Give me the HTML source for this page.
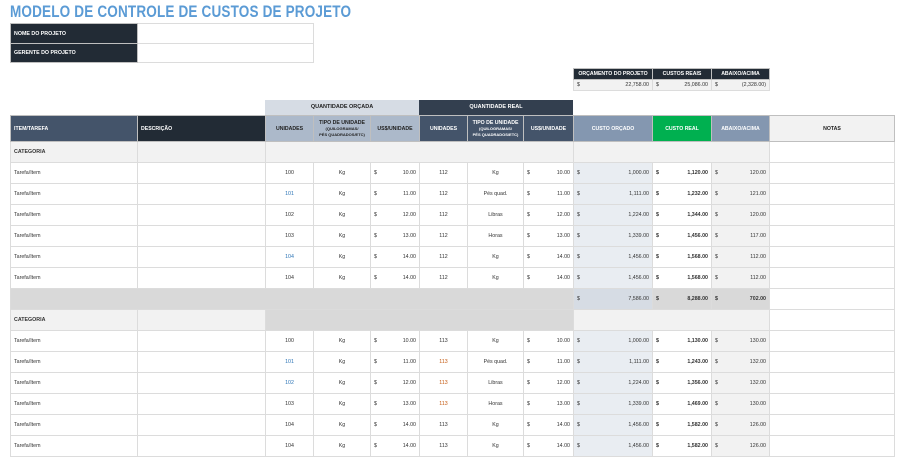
<!DOCTYPE html>
<html><head><meta charset="utf-8"><style>
*{margin:0;padding:0;box-sizing:border-box}
body{width:900px;height:460px;background:#fff;font-family:"Liberation Sans",sans-serif;position:relative;overflow:hidden;color:#333}
h1{position:absolute;left:10px;top:3px;font-size:16.5px;color:#5b9bd5;font-weight:bold;letter-spacing:0.2px;transform:scaleX(0.82);transform-origin:left top;white-space:nowrap}
.abs{position:absolute}
table{border-collapse:collapse;table-layout:fixed;position:absolute}
td{border:1px solid #dcdcdc;font-size:5.3px;overflow:hidden;white-space:nowrap;padding:0 3px}
.h td{font-weight:bold;color:#fff;text-align:center;font-size:5.2px;border-color:#bfbfbf}
.m{display:flex;justify-content:space-between}
.c{text-align:center}
.b{font-weight:bold}
.bl{color:#2e75b6}.or{color:#c55a11}
</style></head><body>
<h1>MODELO DE CONTROLE DE CUSTOS DE PROJETO</h1>
<table style="left:10px;top:23px;width:303px">
<col style="width:127px"><col style="width:176px">
<tr style="height:20px"><td style="background:#222b35;color:#fff;font-weight:bold;border-color:#bfbfbf">NOME DO PROJETO</td><td></td></tr>
<tr style="height:19px"><td style="background:#222b35;color:#fff;font-weight:bold;border-color:#bfbfbf">GERENTE DO PROJETO</td><td></td></tr>
</table>
<table style="left:573px;top:68px;width:196px">
<col style="width:79px"><col style="width:59px"><col style="width:58px">
<tr class="h" style="height:11px"><td style="background:#222b35">ORÇAMENTO DO PROJETO</td><td style="background:#222b35">CUSTOS REAIS</td><td style="background:#222b35">ABAIXO/ACIMA</td></tr>
<tr style="height:11px;background:#f2f2f2"><td><div class="m"><span>$</span><span>22,758.00</span></div></td><td><div class="m"><span>$</span><span>25,086.00</span></div></td><td><div class="m"><span>$</span><span>(2,328.00)</span></div></td></tr>
</table>
<div class="abs" style="left:265px;top:100px;width:154px;height:15px;background:#d6dce4;font-size:5.5px;font-weight:bold;text-align:center;line-height:15px;color:#222">QUANTIDADE ORÇADA</div>
<div class="abs" style="left:419px;top:100px;width:154px;height:15px;background:#333f4f;font-size:5.5px;font-weight:bold;text-align:center;line-height:15px;color:#fff">QUANTIDADE REAL</div>
<table style="left:10px;top:115px;width:884px">
<col style="width:127px"><col style="width:128px"><col style="width:48px"><col style="width:57px"><col style="width:49px"><col style="width:48px"><col style="width:56px"><col style="width:50px"><col style="width:79px"><col style="width:59px"><col style="width:58px"><col style="width:125px">
<tr class="h" style="height:26px">
<td style="background:#44546a;text-align:left">ITEM/TAREFA</td>
<td style="background:#222b35;text-align:left">DESCRIÇÃO</td>
<td style="background:#acb9ca;color:#222">UNIDADES</td>
<td style="background:#acb9ca;color:#222;line-height:6px">TIPO DE UNIDADE<br><span style="font-size:4px">(QUILOGRAMAS/<br>PÉS QUADRADOS/ETC)</span></td>
<td style="background:#acb9ca;color:#222">US$/UNIDADE</td>
<td style="background:#44546a">UNIDADES</td>
<td style="background:#44546a;line-height:6px">TIPO DE UNIDADE<br><span style="font-size:4px">(QUILOGRAMAS/<br>PÉS QUADRADOS/ETC)</span></td>
<td style="background:#44546a">US$/UNIDADE</td>
<td style="background:#8497b0">CUSTO ORÇADO</td>
<td style="background:#00b050">CUSTO REAL</td>
<td style="background:#8497b0">ABAIXO/ACIMA</td>
<td style="background:#f2f2f2;color:#222">NOTAS</td>
</tr>
<tr style="height:21px"><td class="b" style="background:#f2f2f2">CATEGORIA</td><td style="background:#f2f2f2"></td><td colspan="6" style="background:#f2f2f2"></td><td colspan="3" style="background:#f2f2f2"></td><td></td></tr>
<tr style="height:21px"><td>Tarefa/Item</td><td></td><td class="c">100</td><td class="c">Kg</td><td><div class="m"><span>$</span><span>10.00</span></div></td><td class="c">112</td><td class="c">Kg</td><td><div class="m"><span>$</span><span>10.00</span></div></td><td style="background:#e9edf2"><div class="m"><span>$</span><span>1,000.00</span></div></td><td class="b"><div class="m"><span>$</span><span>1,120.00</span></div></td><td style="background:#f2f2f2"><div class="m"><span>$</span><span>120.00</span></div></td><td></td></tr>
<tr style="height:21px"><td>Tarefa/Item</td><td></td><td class="c bl">101</td><td class="c">Kg</td><td><div class="m"><span>$</span><span>11.00</span></div></td><td class="c">112</td><td class="c">Pés quad.</td><td><div class="m"><span>$</span><span>11.00</span></div></td><td style="background:#e9edf2"><div class="m"><span>$</span><span>1,111.00</span></div></td><td class="b"><div class="m"><span>$</span><span>1,232.00</span></div></td><td style="background:#f2f2f2"><div class="m"><span>$</span><span>121.00</span></div></td><td></td></tr>
<tr style="height:21px"><td>Tarefa/Item</td><td></td><td class="c">102</td><td class="c">Kg</td><td><div class="m"><span>$</span><span>12.00</span></div></td><td class="c">112</td><td class="c">Libras</td><td><div class="m"><span>$</span><span>12.00</span></div></td><td style="background:#e9edf2"><div class="m"><span>$</span><span>1,224.00</span></div></td><td class="b"><div class="m"><span>$</span><span>1,344.00</span></div></td><td style="background:#f2f2f2"><div class="m"><span>$</span><span>120.00</span></div></td><td></td></tr>
<tr style="height:21px"><td>Tarefa/Item</td><td></td><td class="c">103</td><td class="c">Kg</td><td><div class="m"><span>$</span><span>13.00</span></div></td><td class="c">112</td><td class="c">Horas</td><td><div class="m"><span>$</span><span>13.00</span></div></td><td style="background:#e9edf2"><div class="m"><span>$</span><span>1,339.00</span></div></td><td class="b"><div class="m"><span>$</span><span>1,456.00</span></div></td><td style="background:#f2f2f2"><div class="m"><span>$</span><span>117.00</span></div></td><td></td></tr>
<tr style="height:21px"><td>Tarefa/Item</td><td></td><td class="c bl">104</td><td class="c">Kg</td><td><div class="m"><span>$</span><span>14.00</span></div></td><td class="c">112</td><td class="c">Kg</td><td><div class="m"><span>$</span><span>14.00</span></div></td><td style="background:#e9edf2"><div class="m"><span>$</span><span>1,456.00</span></div></td><td class="b"><div class="m"><span>$</span><span>1,568.00</span></div></td><td style="background:#f2f2f2"><div class="m"><span>$</span><span>112.00</span></div></td><td></td></tr>
<tr style="height:21px"><td>Tarefa/Item</td><td></td><td class="c">104</td><td class="c">Kg</td><td><div class="m"><span>$</span><span>14.00</span></div></td><td class="c">112</td><td class="c">Kg</td><td><div class="m"><span>$</span><span>14.00</span></div></td><td style="background:#e9edf2"><div class="m"><span>$</span><span>1,456.00</span></div></td><td class="b"><div class="m"><span>$</span><span>1,568.00</span></div></td><td style="background:#f2f2f2"><div class="m"><span>$</span><span>112.00</span></div></td><td></td></tr>
<tr style="height:21px"><td colspan="8" style="background:#d9d9d9"></td><td style="background:#d6dce4"><div class="m"><span>$</span><span>7,586.00</span></div></td><td class="b" style="background:#d9d9d9"><div class="m"><span>$</span><span>8,288.00</span></div></td><td class="b" style="background:#d9d9d9"><div class="m"><span>$</span><span>702.00</span></div></td><td></td></tr>
<tr style="height:21px"><td class="b" style="background:#f2f2f2">CATEGORIA</td><td style="background:#f2f2f2"></td><td colspan="6" style="background:#d9d9d9"></td><td colspan="3" style="background:#f2f2f2"></td><td></td></tr>
<tr style="height:21px"><td>Tarefa/Item</td><td></td><td class="c">100</td><td class="c">Kg</td><td><div class="m"><span>$</span><span>10.00</span></div></td><td class="c">113</td><td class="c">Kg</td><td><div class="m"><span>$</span><span>10.00</span></div></td><td style="background:#e9edf2"><div class="m"><span>$</span><span>1,000.00</span></div></td><td class="b"><div class="m"><span>$</span><span>1,130.00</span></div></td><td style="background:#f2f2f2"><div class="m"><span>$</span><span>130.00</span></div></td><td></td></tr>
<tr style="height:21px"><td>Tarefa/Item</td><td></td><td class="c bl">101</td><td class="c">Kg</td><td><div class="m"><span>$</span><span>11.00</span></div></td><td class="c or">113</td><td class="c">Pés quad.</td><td><div class="m"><span>$</span><span>11.00</span></div></td><td style="background:#e9edf2"><div class="m"><span>$</span><span>1,111.00</span></div></td><td class="b"><div class="m"><span>$</span><span>1,243.00</span></div></td><td style="background:#f2f2f2"><div class="m"><span>$</span><span>132.00</span></div></td><td></td></tr>
<tr style="height:21px"><td>Tarefa/Item</td><td></td><td class="c bl">102</td><td class="c">Kg</td><td><div class="m"><span>$</span><span>12.00</span></div></td><td class="c or">113</td><td class="c">Libras</td><td><div class="m"><span>$</span><span>12.00</span></div></td><td style="background:#e9edf2"><div class="m"><span>$</span><span>1,224.00</span></div></td><td class="b"><div class="m"><span>$</span><span>1,356.00</span></div></td><td style="background:#f2f2f2"><div class="m"><span>$</span><span>132.00</span></div></td><td></td></tr>
<tr style="height:21px"><td>Tarefa/Item</td><td></td><td class="c">103</td><td class="c">Kg</td><td><div class="m"><span>$</span><span>13.00</span></div></td><td class="c or">113</td><td class="c">Horas</td><td><div class="m"><span>$</span><span>13.00</span></div></td><td style="background:#e9edf2"><div class="m"><span>$</span><span>1,339.00</span></div></td><td class="b"><div class="m"><span>$</span><span>1,469.00</span></div></td><td style="background:#f2f2f2"><div class="m"><span>$</span><span>130.00</span></div></td><td></td></tr>
<tr style="height:21px"><td>Tarefa/Item</td><td></td><td class="c">104</td><td class="c">Kg</td><td><div class="m"><span>$</span><span>14.00</span></div></td><td class="c">113</td><td class="c">Kg</td><td><div class="m"><span>$</span><span>14.00</span></div></td><td style="background:#e9edf2"><div class="m"><span>$</span><span>1,456.00</span></div></td><td class="b"><div class="m"><span>$</span><span>1,582.00</span></div></td><td style="background:#f2f2f2"><div class="m"><span>$</span><span>126.00</span></div></td><td></td></tr>
<tr style="height:21px"><td>Tarefa/Item</td><td></td><td class="c">104</td><td class="c">Kg</td><td><div class="m"><span>$</span><span>14.00</span></div></td><td class="c">113</td><td class="c">Kg</td><td><div class="m"><span>$</span><span>14.00</span></div></td><td style="background:#e9edf2"><div class="m"><span>$</span><span>1,456.00</span></div></td><td class="b"><div class="m"><span>$</span><span>1,582.00</span></div></td><td style="background:#f2f2f2"><div class="m"><span>$</span><span>126.00</span></div></td><td></td></tr>
</table>
</body></html>
